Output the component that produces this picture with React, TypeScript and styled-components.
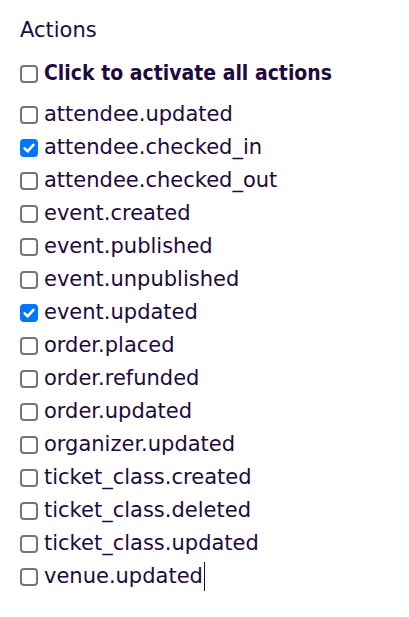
import React, { useState } from 'react';
import styled, { createGlobalStyle } from 'styled-components';

const ACTIONS = [
  'attendee.updated',
  'attendee.checked_in',
  'attendee.checked_out',
  'event.created',
  'event.published',
  'event.unpublished',
  'event.updated',
  'order.placed',
  'order.refunded',
  'order.updated',
  'organizer.updated',
  'ticket_class.created',
  'ticket_class.deleted',
  'ticket_class.updated',
  'venue.updated',
];

const GlobalStyle = createGlobalStyle`
  html, body {
    margin: 0;
    padding: 0;
    background: #fff;
  }
  body {
    font-family: "DejaVu Sans", "Liberation Sans", sans-serif;
    color: #1e0a3c;
  }
`;

function Checkbox({ on, onToggle }: { on: boolean; onToggle: () => void }) {
  return (
    <Box role="checkbox" aria-checked={on} $on={on} onClick={onToggle}>
      {on && (
        <svg width="14" height="14" viewBox="0 0 14 14">
          <path
            d="M2.6 7.4 L5.6 10.3 L11.4 3.8"
            fill="none"
            stroke="#fff"
            strokeWidth="2.6"
            strokeLinecap="round"
            strokeLinejoin="round"
          />
        </svg>
      )}
    </Box>
  );
}

export default function App() {
  const [checked, setChecked] = useState<Record<string, boolean>>({
    'attendee.checked_in': true,
    'event.updated': true,
  });

  const allOn = ACTIONS.every((a) => checked[a]);

  const toggleAll = () => {
    const next: Record<string, boolean> = {};
    ACTIONS.forEach((a) => (next[a] = !allOn));
    setChecked(next);
  };

  return (
    <React.Fragment>
      <GlobalStyle />
      <Panel>
        <Label>Actions</Label>
        <AllRow>
          <Checkbox on={allOn} onToggle={toggleAll} />
          <AllText>Click to activate all actions</AllText>
        </AllRow>
        <List>
          {ACTIONS.map((a, i) => (
            <Row key={a}>
              <Checkbox
                on={!!checked[a]}
                onToggle={() => setChecked({ ...checked, [a]: !checked[a] })}
              />
              <RowText>
                {a}
                {i === ACTIONS.length - 1 && <Caret />}
              </RowText>
            </Row>
          ))}
        </List>
      </Panel>
    </React.Fragment>
  );
}

const Panel = styled.div`
  padding: 14px 20px 20px 20px;
`;

const Label = styled.div`
  font-size: 21px;
  line-height: 33px;
  margin-bottom: 10px;
`;

const Box = styled.span<{ $on: boolean }>`
  box-sizing: border-box;
  width: 18px;
  height: 18px;
  flex: none;
  display: flex;
  align-items: center;
  justify-content: center;
  border-radius: 4px;
  border: 2px solid ${(p) => (p.$on ? '#0075ff' : '#757575')};
  background: ${(p) => (p.$on ? '#0075ff' : '#fff')};
  cursor: pointer;
`;

const Row = styled.div`
  display: flex;
  align-items: center;
  gap: 6px;
  height: 33px;
`;

const AllRow = styled(Row)`
  margin-bottom: 8px;
`;

const AllText = styled.span`
  font-family: "DejaVu Sans Condensed", "DejaVu Sans", sans-serif;
  font-weight: 700;
  font-size: 21px;
  line-height: 33px;
`;

const List = styled.div`
  display: flex;
  flex-direction: column;
`;

const RowText = styled.span`
  font-size: 21px;
  line-height: 33px;
  display: flex;
  align-items: center;
`;

const Caret = styled.span`
  display: inline-block;
  width: 1px;
  height: 29px;
  background: #1e0a3c;
  margin-left: 1px;
`;
